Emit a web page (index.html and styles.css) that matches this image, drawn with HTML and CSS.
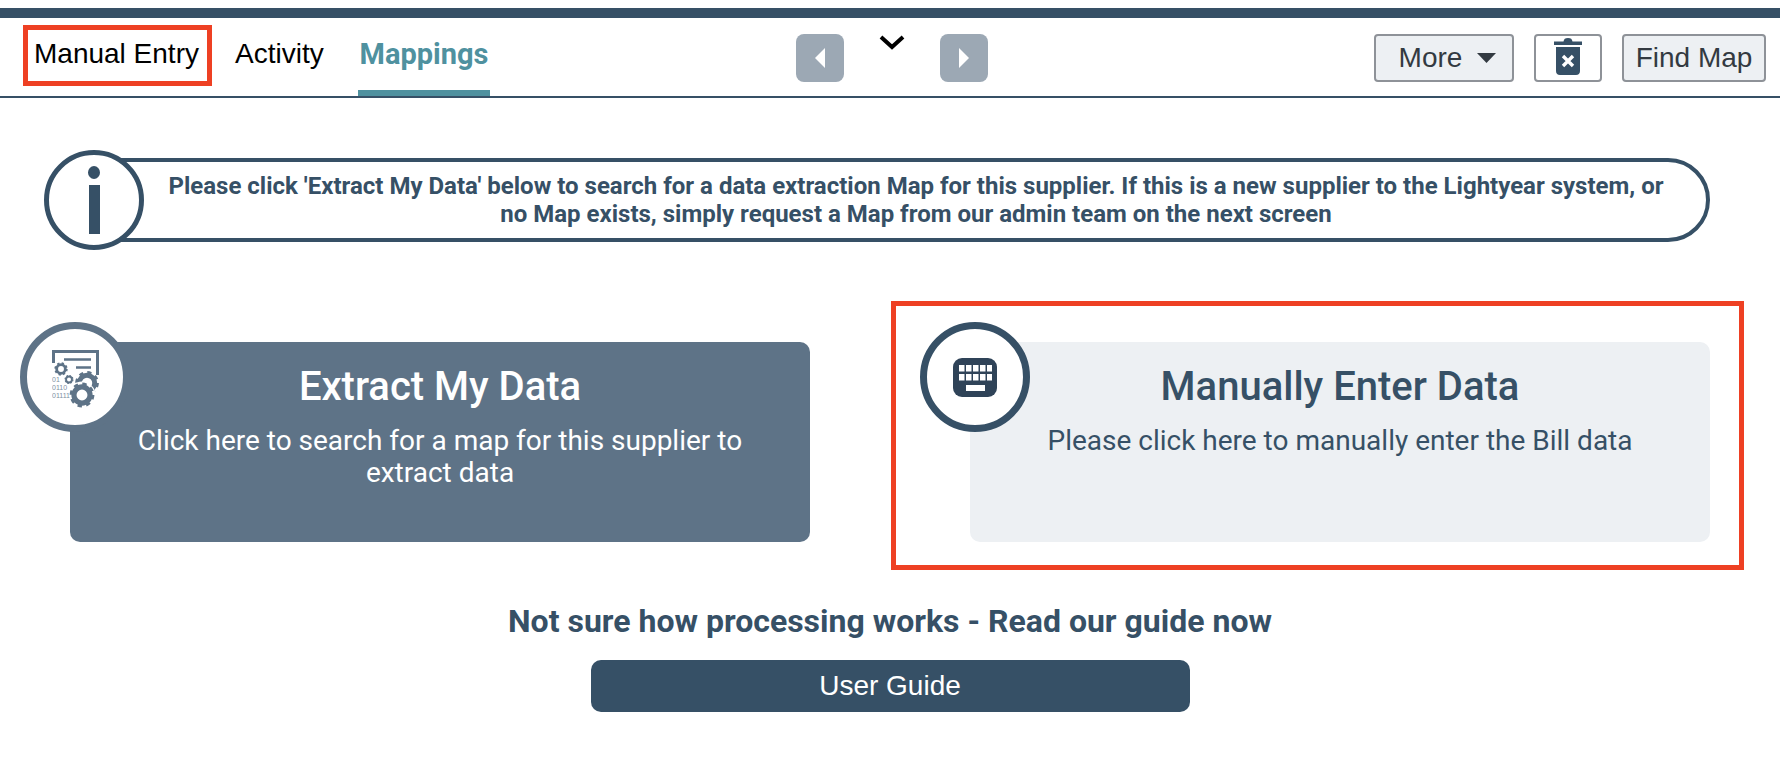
FILE: index.html
```html
<!DOCTYPE html>
<html lang="en">
<head>
<meta charset="utf-8">
<title>Mappings</title>
<link rel="stylesheet" href="styles.css">
</head>
<body>
<div class="topbar"></div>
<header class="header">
  <nav class="tabs">
    <a class="tab tab-marked">Manual Entry</a>
    <a class="tab tab-plain">Activity</a>
    <a class="tab tab-active">Mappings</a>
  </nav>
  <div class="pager">
    <button class="nav-btn"><svg width="10" height="20" viewBox="0 0 10 20"><path d="M10 0V20L0 10Z" fill="#fff"/></svg></button>
    <svg class="chevron" width="26" height="16" viewBox="0 0 26 16"><path d="M2 3L13 13L24 3" fill="none" stroke="#000" stroke-width="4"/></svg>
    <button class="nav-btn"><svg width="10" height="20" viewBox="0 0 10 20"><path d="M0 0V20L10 10Z" fill="#fff"/></svg></button>
  </div>
  <div class="actions">
    <button class="act act-more">More<svg width="19" height="10" viewBox="0 0 19 10"><path d="M0 0H19L9.5 10Z" fill="#333a41"/></svg></button>
    <button class="act act-trash"><svg width="28" height="37" viewBox="0 0 28 37"><path d="M0 3.500H9.500C10 1 11 0 14 0C17 0 18 1 18.500 3.500H28V7H0Z M2 9H26V33C26 35.500 24.500 37 22 37H6C3.500 37 2 35.500 2 33Z" fill="#365066"/><path d="M9 18L19 28M19 18L9 28" stroke="#fff" stroke-width="3.400"/></svg></button>
    <button class="act act-find">Find Map</button>
  </div>
</header>
<main class="main">
  <section class="banner">
    <div class="banner-icon"><span class="dot"></span><span class="stem"></span></div>
    <p class="banner-text">Please click 'Extract My Data' below to search for a data extraction Map for this supplier. If this is a new supplier to the Lightyear system, or no Map exists, simply request a Map from our admin team on the next screen</p>
  </section>
  <section class="choices">
    <div class="choice-slot">
      <a class="card card-dark">
        <h2>Extract My Data</h2>
        <p>Click here to search for a map for this supplier to extract data</p>
        <span class="badge badge-dark">
          <svg width="50" height="60" viewBox="0 0 50 60">
            <defs>
              <g id="gear">
                <circle r="7" fill="none" stroke="#5e7387" stroke-width="4.500"/>
                <circle r="9.300" fill="none" stroke="#5e7387" stroke-width="3" stroke-dasharray="3.650 3.650"/>
              </g>
            </defs>
            <path d="M1.500 13V1.500H45.500V25" fill="none" stroke="#5e7387" stroke-width="3"/>
            <path d="M12 9.500H39M24 17.500H39" stroke="#5e7387" stroke-width="2.500"/>
            <use href="#gear" transform="translate(9 19) scale(.62)"/>
            <use href="#gear" transform="translate(17 29.500) scale(.42)"/>
            <use href="#gear" transform="translate(35 33) scale(1.100)"/>
            <circle cx="30" cy="45" r="13.500" fill="#fff"/>
            <use href="#gear" transform="translate(30 45) scale(1.150)"/>
            <text class="bits" x="0" y="32">01</text>
            <text class="bits" x="0" y="40">0110</text>
            <text class="bits" x="0" y="48">01111</text>
          </svg>
        </span>
      </a>
    </div>
    <div class="choice-slot choice-marked">
      <a class="card card-light">
        <h2>Manually Enter Data</h2>
        <p>Please click here to manually enter the Bill data</p>
        <span class="badge badge-light">
          <svg width="44" height="39" viewBox="0 0 44 39">
            <rect width="44" height="39" rx="9" fill="#2f4358"/>
            <g fill="#fff">
              <rect x="6" y="7" width="5.500" height="6.500"/><rect x="13" y="7" width="5.500" height="6.500"/><rect x="20" y="7" width="5.500" height="6.500"/><rect x="27" y="7" width="5.500" height="6.500"/><rect x="34" y="7" width="5" height="6.500"/>
              <rect x="6" y="16" width="5.500" height="6.500"/><rect x="13" y="16" width="5.500" height="6.500"/><rect x="20" y="16" width="5.500" height="6.500"/><rect x="27" y="16" width="5.500" height="6.500"/><rect x="34" y="16" width="5" height="6.500"/>
              <rect x="13" y="27" width="19" height="6"/>
            </g>
          </svg>
        </span>
      </a>
    </div>
  </section>
  <section class="guide">
    <h3>Not sure how processing works - Read our guide now</h3>
    <button class="guide-btn">User Guide</button>
  </section>
</main>
</body>
</html>
```

FILE: styles.css
```css
* { box-sizing: border-box; }
html, body { margin: 0; padding: 0; }
body {
  width: 1780px;
  height: 784px;
  overflow: hidden;
  background: #fff;
  font-family: "Liberation Sans", Arial, sans-serif;
  padding-top: 8px;
}
h2, h3, p { margin: 0; }
button { font-family: inherit; cursor: pointer; }

.topbar { height: 10px; background: #365066; }

.header {
  height: 80px;
  border-bottom: 2px solid #365066;
  display: flex;
  align-items: flex-start;
}
.tabs { display: flex; align-items: flex-start; padding-left: 23px; width: 796px; flex: none; }
.tab {
  flex: none;
  font-size: 28px;
  line-height: 32px;
  color: #000;
  white-space: nowrap;
  margin-top: 7px;
}
.tab-marked {
  border: 5px solid #ee4023;
  height: 61px;
  width: 189px;
  padding: 8px 0 0 6px;
  margin-right: 23px;
}
.tab-plain { width: 123px; padding-top: 13px; }
.tab-active {
  font-family: Roboto, sans-serif;
  font-weight: 700;
  font-size: 29px;
  color: #4f919f;
  border-bottom: 6px solid #4f919f;
  width: 132px;
  height: 71px;
  padding-top: 13px;
  text-align: center;
}

.pager { display: flex; align-items: flex-start; padding-top: 16px; width: 192px; flex: none; justify-content: space-between; }
.nav-btn {
  width: 48px;
  height: 48px;
  border: 0;
  border-radius: 8px;
  background: #9ca8b4;
  display: flex;
  align-items: center;
  justify-content: center;
  padding: 0;
}

.actions { display: flex; align-items: flex-start; gap: 20px; padding-top: 16px; margin-left: 386px; flex: none; }
.act {
  height: 48px;
  border: 2px solid #8e9298;
  border-radius: 4px;
  background: #edf0f3;
  color: #333a41;
  font-size: 28px;
  padding: 0;
  display: flex;
  align-items: center;
  justify-content: center;
}
.act-more { width: 140px; gap: 15px; padding-left: 7px; }
.act-trash { width: 68px; background: #fff; padding-bottom: 4px; }
.act-find { width: 144px; }

.main { display: flex; flex-direction: column; }

.banner { position: relative; margin: 60px 70px 0 60px; height: 84px; }
.banner-text {
  height: 84px;
  border: 4px solid #365066;
  border-radius: 42px;
  padding: 10px 40px 0 102px;
  font-family: Roboto, sans-serif;
  font-weight: 700;
  font-size: 24px;
  line-height: 28px;
  color: #365066;
  text-align: center;
}
.banner-icon {
  position: absolute;
  left: -16px;
  top: -8px;
  width: 100px;
  height: 100px;
  border: 5px solid #365066;
  border-radius: 50%;
  background: #fff;
  display: flex;
  flex-direction: column;
  align-items: center;
  padding-top: 11px;
}
.dot { width: 12px; height: 13px; border-radius: 50%; background: #365066; }
.stem { width: 11px; height: 49px; margin-top: 6px; background: #365066; }

.choices { display: flex; margin-top: 59px; padding-left: 70px; align-items: flex-start; }
.choice-slot { margin-top: 41px; margin-right: 160px; flex: none; }
.choice-marked {
  margin: 0 0 0 -79px;
  border: 5px solid #ee4023;
  width: 853px;
  height: 269px;
  padding: 36px 0 0 74px;
}
.card {
  position: relative;
  display: block;
  width: 740px;
  height: 200px;
  border-radius: 10px;
  padding: 22px 40px 0 40px;
  text-align: center;
  font-family: Roboto, sans-serif;
}
.card h2 { font-size: 40px; font-weight: 500; line-height: 46px; }
.card p { font-size: 28px; line-height: 32px; margin-top: 15px; }
.card-dark { background: #5e7387; color: #fff; }
.card-light { background: #edf0f3; color: #365066; }
.badge {
  position: absolute;
  left: -50px;
  top: -20px;
  width: 110px;
  height: 110px;
  border-radius: 50%;
  background: #fff;
  display: flex;
  align-items: center;
  justify-content: center;
}
.badge-dark { border: 7px solid #5e7387; padding: 6px 0 0 4px; }
.badge-light { border: 7px solid #365066; }
.bits { font-family: "Liberation Sans", sans-serif; font-size: 7px; fill: #7e8f9f; }

.guide { display: flex; flex-direction: column; align-items: center; margin-top: 31px; }
.guide h3 {
  font-family: Roboto, sans-serif;
  font-weight: 700;
  font-size: 32px;
  line-height: 40px;
  color: #365066;
}
.guide-btn {
  width: 599px;
  height: 52px;
  margin-top: 19px;
  border: 0;
  border-radius: 10px;
  background: #365066;
  color: #fff;
  font-size: 28px;
}
```
